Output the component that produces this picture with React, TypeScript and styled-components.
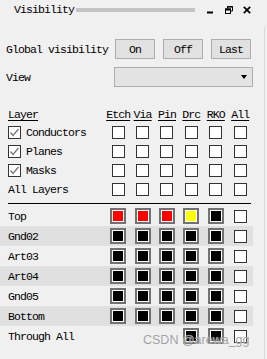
import React from 'react';
import styled, { createGlobalStyle } from 'styled-components';

const GlobalStyle = createGlobalStyle`
  html, body { margin: 0; padding: 0; background: #f0f0f0; }
  body { width: 267px; height: 359px; overflow: hidden; }
`;

const Panel = styled.div`
  position: relative;
  width: 267px;
  height: 359px;
  background: #f0f0f0;
  display: flex;
  flex-direction: column;
  font-family: "Liberation Mono", "DejaVu Sans Mono", monospace;
  font-size: 11.5px;
  letter-spacing: -0.9px;
  color: #000;
  overflow: hidden;
`;

const TitleBar = styled.div`
  height: 20px;
  display: flex;
  align-items: center;
  padding-left: 14px;
`;

const TitleText = styled.span`
  line-height: 1;
  width: 59px;
  white-space: nowrap;
`;

const Grip = styled.div`
  margin-left: 3px;
  width: 119px;
  height: 4px;
  background: #c4c4c4;
`;

const TitleIcon = styled.svg<{ $gap: number }>`
  margin-left: ${(p) => p.$gap}px;
  display: block;
  flex: none;
`;

const Body = styled.div`
  flex: 1;
  display: flex;
  flex-direction: column;
  margin-top: 7px;
  width: 264px;
  border-right: 1px solid #d9d9d9;
  padding-top: 12px;
`;

const FormRow = styled.div<{ $top?: number }>`
  display: flex;
  align-items: center;
  height: 20px;
  padding-left: 6px;
  margin-top: ${(p) => p.$top ?? 0}px;
`;

const FormLabel = styled.span<{ $w: number }>`
  width: ${(p) => p.$w}px;
  flex: none;
  white-space: nowrap;
`;

const ButtonGroup = styled.div`
  display: flex;
  gap: 8px;
`;

const Button = styled.button`
  width: 40px;
  height: 20px;
  box-sizing: border-box;
  border: 1px solid #adadad;
  background: #e1e1e1;
  font: inherit;
  letter-spacing: inherit;
  color: #000;
  padding: 0;
  display: flex;
  align-items: center;
  justify-content: center;
`;

const Select = styled.div`
  width: 139px;
  height: 20px;
  box-sizing: border-box;
  border: 1px solid #adadad;
  background: #e3e3e3;
  display: flex;
  align-items: center;
  justify-content: flex-end;
  padding-right: 5px;
`;

const Arrow = styled.div`
  width: 0;
  height: 0;
  border-left: 3.5px solid transparent;
  border-right: 3.5px solid transparent;
  border-top: 4px solid #000;
`;

const GridRow = styled.div<{ $h: number; $band?: boolean; $top?: number }>`
  display: grid;
  grid-template-columns: 98px repeat(6, 24.4px);
  align-items: center;
  justify-items: center;
  width: 253px;
  box-sizing: border-box;
  padding-left: 8px;
  height: ${(p) => p.$h}px;
  margin-top: ${(p) => p.$top ?? 0}px;
  background: ${(p) => (p.$band ? '#e0e0e0' : 'transparent')};
`;

const LabelCell = styled.div`
  justify-self: start;
  display: flex;
  align-items: center;
  gap: 5px;
  white-space: nowrap;
`;

const HeadLabel = styled.span<{ $start?: boolean }>`
  text-decoration: underline;
  text-underline-offset: 2px;
  justify-self: ${(p) => (p.$start ? 'start' : 'center')};
  white-space: nowrap;
`;

const Box = styled.div`
  width: 13px;
  height: 13px;
  box-sizing: border-box;
  border: 1px solid #333;
  background: #fff;
  display: flex;
  align-items: center;
  justify-content: center;
`;

const Swatch = styled.div<{ $c: string }>`
  width: 16px;
  height: 16px;
  box-sizing: border-box;
  border: 2px solid #717171;
  background: #fff;
  padding: 1px;
  &::after {
    content: '';
    display: block;
    width: 100%;
    height: 100%;
    background: ${(p) => p.$c};
  }
`;

const Separator = styled.div`
  margin: 4px 0 2px 8px;
  width: 243px;
  height: 1px;
  background: #000;
`;

const Watermark = styled.div`
  position: absolute;
  left: 143px;
  top: 333px;
  font-family: "Liberation Sans", Arial, sans-serif;
  font-size: 12.5px;
  letter-spacing: 0;
  color: rgba(140, 140, 140, 0.85);
  text-shadow: 0 0 1px #fff;
  white-space: nowrap;
`;

const Check = () => (
  <svg width="11" height="11" viewBox="0 0 11 11">
    <polyline points="1.5,5.5 4,8.5 9.5,2" fill="none" stroke="#777" strokeWidth="1.3" />
  </svg>
);

const cols = ['Etch', 'Via', 'Pin', 'Drc', 'RKO', 'All'];
const groups = [
  { name: 'Conductors', checked: true },
  { name: 'Planes', checked: true },
  { name: 'Masks', checked: true },
  { name: 'All Layers', checked: false },
];

const R = '#ff0000';
const K = '#000000';
const Y = '#ffff00';

const layers: { name: string; colors: (string | null)[] }[] = [
  { name: 'Top', colors: [R, R, R, Y, K] },
  { name: 'Gnd02', colors: [K, K, K, K, K] },
  { name: 'Art03', colors: [K, K, K, K, K] },
  { name: 'Art04', colors: [K, K, K, K, K] },
  { name: 'Gnd05', colors: [K, K, K, K, K] },
  { name: 'Bottom', colors: [K, K, K, K, K] },
  { name: 'Through All', colors: [null, null, null, K, K] },
];

export default function App() {
  return (
    <>
      <GlobalStyle />
      <Panel>
        <TitleBar>
          <TitleText>Visibility</TitleText>
          <Grip />
          <TitleIcon $gap={12} width="6" height="8" viewBox="0 0 6 8">
            <rect x="0" y="5.5" width="6" height="2" fill="#000" />
          </TitleIcon>
          <TitleIcon $gap={12} width="8" height="8" viewBox="0 0 8 8">
            <path d="M2.5 2.5V0.5H7.5V5H5.5" fill="none" stroke="#000" strokeWidth="1" />
            <rect x="2.5" y="0" width="5" height="1.6" fill="#000" />
            <rect x="0.5" y="3" width="5" height="4.5" fill="none" stroke="#000" strokeWidth="1" />
            <rect x="0" y="2.5" width="6" height="2" fill="#000" />
          </TitleIcon>
          <TitleIcon $gap={10} width="8" height="8" viewBox="0 0 8 8">
            <path d="M0.8 0.8L7.2 7.2M7.2 0.8L0.8 7.2" stroke="#000" strokeWidth="1.7" />
          </TitleIcon>
        </TitleBar>
        <Body>
          <FormRow>
            <FormLabel $w={109}>Global visibility</FormLabel>
            <ButtonGroup>
              <Button>On</Button>
              <Button>Off</Button>
              <Button>Last</Button>
            </ButtonGroup>
          </FormRow>
          <FormRow $top={8}>
            <FormLabel $w={108}>View</FormLabel>
            <Select>
              <Arrow />
            </Select>
          </FormRow>

          <GridRow $h={17} $top={19}>
            <HeadLabel $start>Layer</HeadLabel>
            {cols.map((c) => (
              <HeadLabel key={c}>{c}</HeadLabel>
            ))}
          </GridRow>
          {groups.map((g) => (
            <GridRow key={g.name} $h={19}>
              <LabelCell>
                {g.checked && (
                  <Box>
                    <Check />
                  </Box>
                )}
                <span>{g.name}</span>
              </LabelCell>
              {cols.map((c) => (
                <Box key={c} />
              ))}
            </GridRow>
          ))}
          <Separator />
          {layers.map((l, i) => (
            <GridRow key={l.name} $h={20} $band={i % 2 === 1}>
              <LabelCell>{l.name}</LabelCell>
              {l.colors.map((c, j) => (c ? <Swatch key={j} $c={c} /> : <span key={j} />))}
              <Box />
            </GridRow>
          ))}
        </Body>
        <Watermark>CSDN @arewa_gg</Watermark>
      </Panel>
    </>
  );
}
